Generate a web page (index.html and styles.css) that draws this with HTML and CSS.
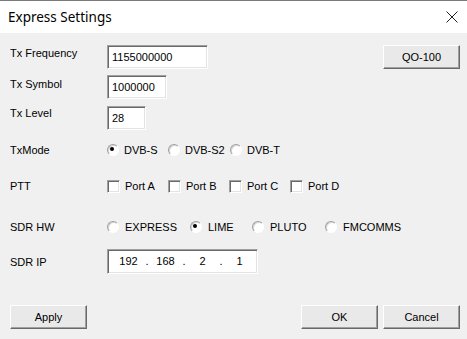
FILE: index.html
```html
<!DOCTYPE html>
<html>
<head>
	<title>Express Settings</title>
	<link rel="stylesheet" href="styles.css">
</head>
<body>
	<div class="dialog">
		<header class="titlebar">
			<h1>Express Settings</h1>
			<svg class="close" width="12" height="12" viewBox="0 0 12 12">
				<path d="M0.5 0.5 L11.5 11.5 M11.5 0.5 L0.5 11.5" stroke="#222" stroke-width="1" fill="none"/>
			</svg>
		</header>

		<main class="content">
			<div class="row row-freq">
				<label class="lbl lbl-freq">Tx Frequency</label>
				<div class="field w-freq">1155000000</div>
				<button class="btn btn-qo">QO-100</button>
			</div>
			<div class="row row-sym">
				<label class="lbl lbl-sym">Tx Symbol</label>
				<div class="field w-sym">1000000</div>
			</div>
			<div class="row row-level">
				<label class="lbl">Tx Level</label>
				<div class="field w-level">28</div>
			</div>

			<div class="row opt row-mode">
				<label class="lbl">TxMode</label>
				<div class="choice w-mode1"><span class="radio checked"></span>DVB-S</div>
				<div class="choice w-mode2"><span class="radio"></span>DVB-S2</div>
				<div class="choice"><span class="radio"></span>DVB-T</div>
			</div>

			<div class="row opt row-ptt">
				<label class="lbl">PTT</label>
				<div class="choice w-port"><span class="check"></span>Port A</div>
				<div class="choice w-port"><span class="check"></span>Port B</div>
				<div class="choice w-port"><span class="check"></span>Port C</div>
				<div class="choice"><span class="check"></span>Port D</div>
			</div>

			<div class="row opt row-hw">
				<label class="lbl">SDR HW</label>
				<div class="choice w-hw1"><span class="radio"></span>EXPRESS</div>
				<div class="choice w-hw2"><span class="radio checked"></span>LIME</div>
				<div class="choice w-hw3"><span class="radio"></span>PLUTO</div>
				<div class="choice"><span class="radio"></span>FMCOMMS</div>
			</div>

			<div class="row row-ip">
				<label class="lbl">SDR IP</label>
				<div class="field ip">
					<span class="oct">192</span><span class="dot">.</span>
					<span class="oct">168</span><span class="dot">.</span>
					<span class="oct">2</span><span class="dot">.</span>
					<span class="oct">1</span>
				</div>
			</div>

			<div class="footer">
				<button class="btn">Apply</button>
				<div class="spacer"></div>
				<button class="btn">OK</button>
				<button class="btn">Cancel</button>
			</div>
		</main>
	</div>
</body>
</html>
```

FILE: styles.css
```css
/* General styles */
body {
	margin: 0;
	padding: 0;
	font-family: "Liberation Sans", Arial, sans-serif;
	font-size: 11px;
	color: #000;
	background-color: #f0f0f0;
}

.dialog {
	width: 467px;
	height: 339px;
	background-color: #f0f0f0;
	overflow: hidden;
}

/* Title bar */
.titlebar {
	height: 32px;
	background-color: #fff;
	border-top: 1px solid #7a7a7a;
	display: flex;
	align-items: center;
	padding: 0 8px;
}

.titlebar h1 {
	margin: 0;
	font-family: "Noto Sans", sans-serif;
	font-size: 13.5px;
	font-weight: normal;
	color: #000;
	flex: 1;
}

.close {
	margin-right: 1px;
}

/* Form rows */
.content {
	padding: 0 7px 0 10px;
}

.row {
	display: flex;
	align-items: flex-start;
	height: 24px;
}

.row-freq { margin-top: 12px; }
.row-sym { margin-top: 6px; }
.row-level { margin-top: 7px; }

.lbl {
	width: 97px;
	flex: none;
	line-height: 13px;
	padding-top: 1px;
}

.lbl-freq { padding-top: 2px; }
.lbl-sym { padding-top: 3px; }

.field {
	box-sizing: border-box;
	height: 24px;
	background-color: #fff;
	border: 1px solid;
	border-color: #a0a0a0 #fff #fff #a0a0a0;
	box-shadow: inset 1px 1px #696969, inset -1px -1px #e3e3e3;
	padding: 5px 4px 0;
	line-height: 13px;
}

.w-freq { width: 101px; }
.w-sym { width: 60px; }
.w-level { width: 39px; }

/* Radios and checkboxes */
.opt {
	height: 14px;
	align-items: center;
}

.row-mode { margin-top: 13px; }
.row-ptt { margin-top: 22px; }
.row-hw { margin-top: 27px; }

.opt .lbl {
	padding-top: 0;
}

.choice {
	display: flex;
	align-items: center;
	flex: none;
	line-height: 13px;
}

.w-mode1 { width: 61px; }
.w-mode2 { width: 62px; }
.w-port { width: 61px; }
.w-hw1 { width: 83px; }
.w-hw2 { width: 62px; }
.w-hw3 { width: 73px; }

.radio {
	box-sizing: border-box;
	width: 12px;
	height: 12px;
	border-radius: 50%;
	background-color: #fff;
	border: 1px solid;
	border-color: #a0a0a0 #fff #fff #a0a0a0;
	box-shadow: inset 1px 1px #d4d4d4;
	margin-right: 5px;
	position: relative;
}

.radio.checked::after {
	content: "";
	position: absolute;
	left: 2px;
	top: 2px;
	width: 4px;
	height: 4px;
	border-radius: 50%;
	background-color: #000;
}

.row-hw .radio {
	margin-right: 6px;
}

.check {
	box-sizing: border-box;
	width: 13px;
	height: 13px;
	background-color: #fff;
	border: 1px solid;
	border-color: #a0a0a0 #fff #fff #a0a0a0;
	box-shadow: inset 1px 1px #696969, inset -1px -1px #e3e3e3;
	margin-right: 5px;
}

/* IP address box */
.row-ip {
	margin-top: 15px;
	height: 25px;
	align-items: center;
}

.ip {
	width: 151px;
	height: 25px;
	display: flex;
	padding: 5px 0 0 5px;
}

.oct {
	width: 31px;
	text-align: center;
}

.dot {
	width: 6px;
	text-align: center;
}

/* Buttons */
button {
	font-family: inherit;
	font-size: 11px;
	color: #000;
}

.btn {
	box-sizing: border-box;
	width: 77px;
	height: 24px;
	background-color: #e9e9e9;
	border: 1px solid;
	border-color: #fff #696969 #696969 #fff;
	box-shadow: inset -1px -1px #a0a0a0;
	padding: 0;
}

.btn-qo {
	margin-left: auto;
	margin-right: 0;
}

.footer {
	display: flex;
	margin-top: 31px;
	gap: 5px;
}

.spacer {
	flex: 1;
}
```
